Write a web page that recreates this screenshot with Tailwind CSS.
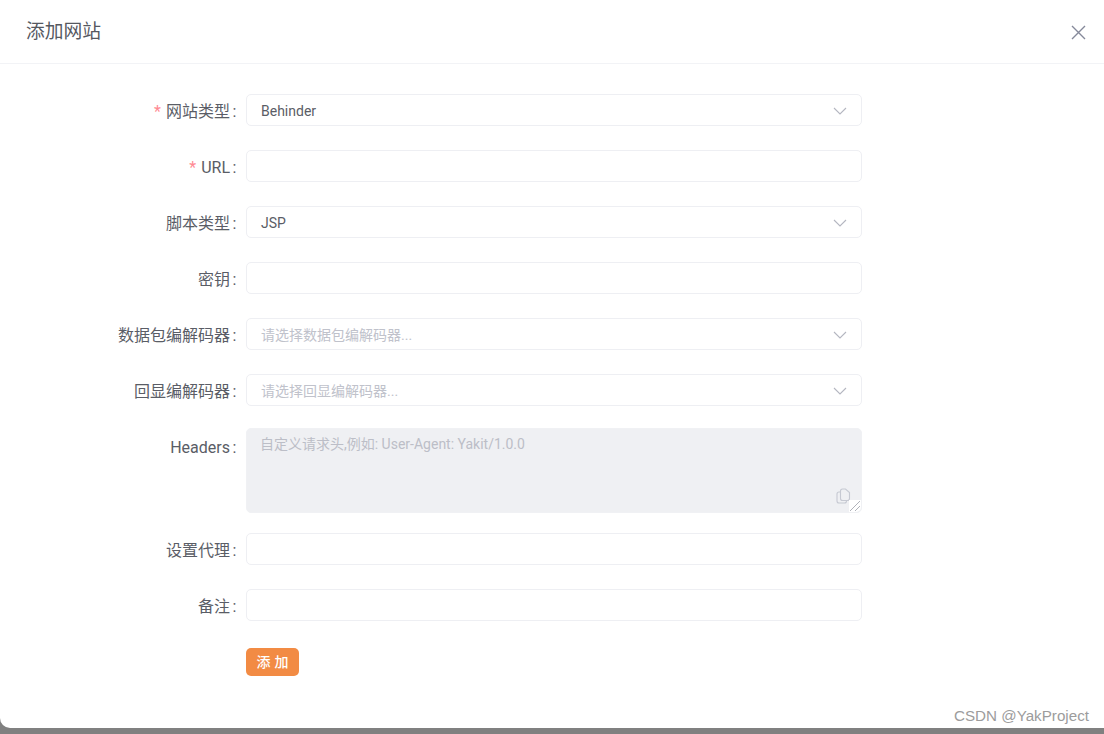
<!DOCTYPE html>
<html lang="zh-CN">
<head>
  <meta charset="UTF-8">
  <title>添加网站</title>
  <script src="https://cdn.jsdelivr.net/npm/@tailwindcss/browser@4"></script>
</head>
<body class="w-[1104px] h-[734px] overflow-hidden bg-[#808080] font-['Roboto','Noto_Sans_CJK_SC',sans-serif]">
  <div class="relative w-[1104px] h-[728px] bg-white rounded-bl-[10px]">
    <!-- header -->
    <div class="h-[64px] border-b border-[#f2f3f6] flex items-center justify-between pl-[26px] pr-[18px] pt-[2px]">
      <span class="text-[18.75px] text-[#55585f]">添加网站</span>
      <svg class="w-[15px] h-[15px] text-[#85899a]" viewBox="0 0 15 15" fill="none" stroke="currentColor" stroke-width="1.4"><path d="M1 1L14 14M14 1L1 14"/></svg>
    </div>

    <!-- form -->
    <div class="pt-[30px] flex flex-col">
      <div class="flex mb-[24px]">
        <label class="w-[246px] pr-[7px] h-[32px] pt-[3px] flex items-center justify-end text-[16px] text-[#5a5d66]"><span class="text-[#ff8a93] mr-[5px]">*</span>网站类型<span class="w-[9px] text-center">:</span></label>
        <div class="w-[616px] h-[32px] border border-[#eeeff3] rounded-[5px] pl-[14px] pr-[14px] pt-[2px] flex items-center justify-between text-[14px] text-[#5a5d66]">
          <span>Behinder</span>
          <svg class="w-[14px] h-[8px] text-[#b4b6c0]" viewBox="0 0 14 8" fill="none" stroke="currentColor" stroke-width="1.1"><path d="M1 1L7 7L13 1"/></svg>
        </div>
      </div>

      <div class="flex mb-[24px]">
        <label class="w-[246px] pr-[7px] h-[32px] pt-[3px] flex items-center justify-end text-[16px] text-[#5a5d66]"><span class="text-[#ff8a93] mr-[5px]">*</span>URL<span class="w-[9px] text-center">:</span></label>
        <div class="w-[616px] h-[32px] border border-[#eeeff3] rounded-[5px]"></div>
      </div>

      <div class="flex mb-[24px]">
        <label class="w-[246px] pr-[7px] h-[32px] pt-[3px] flex items-center justify-end text-[16px] text-[#5a5d66]">脚本类型<span class="w-[9px] text-center">:</span></label>
        <div class="w-[616px] h-[32px] border border-[#eeeff3] rounded-[5px] pl-[14px] pr-[14px] pt-[2px] flex items-center justify-between text-[14px] text-[#5a5d66]">
          <span>JSP</span>
          <svg class="w-[14px] h-[8px] text-[#b4b6c0]" viewBox="0 0 14 8" fill="none" stroke="currentColor" stroke-width="1.1"><path d="M1 1L7 7L13 1"/></svg>
        </div>
      </div>

      <div class="flex mb-[24px]">
        <label class="w-[246px] pr-[7px] h-[32px] pt-[3px] flex items-center justify-end text-[16px] text-[#5a5d66]">密钥<span class="w-[9px] text-center">:</span></label>
        <div class="w-[616px] h-[32px] border border-[#eeeff3] rounded-[5px]"></div>
      </div>

      <div class="flex mb-[24px]">
        <label class="w-[246px] pr-[7px] h-[32px] pt-[3px] flex items-center justify-end text-[16px] text-[#5a5d66]">数据包编解码器<span class="w-[9px] text-center">:</span></label>
        <div class="w-[616px] h-[32px] border border-[#eeeff3] rounded-[5px] pl-[14px] pr-[14px] pt-[2px] flex items-center justify-between text-[14px] text-[#c0c2cb]">
          <span>请选择数据包编解码器...</span>
          <svg class="w-[14px] h-[8px] text-[#b4b6c0]" viewBox="0 0 14 8" fill="none" stroke="currentColor" stroke-width="1.1"><path d="M1 1L7 7L13 1"/></svg>
        </div>
      </div>

      <div class="flex mb-[22px]">
        <label class="w-[246px] pr-[7px] h-[32px] pt-[3px] flex items-center justify-end text-[16px] text-[#5a5d66]">回显编解码器<span class="w-[9px] text-center">:</span></label>
        <div class="w-[616px] h-[32px] border border-[#eeeff3] rounded-[5px] pl-[14px] pr-[14px] pt-[2px] flex items-center justify-between text-[14px] text-[#c0c2cb]">
          <span>请选择回显编解码器...</span>
          <svg class="w-[14px] h-[8px] text-[#b4b6c0]" viewBox="0 0 14 8" fill="none" stroke="currentColor" stroke-width="1.1"><path d="M1 1L7 7L13 1"/></svg>
        </div>
      </div>

      <div class="flex mb-[20px]">
        <label class="w-[246px] pr-[7px] h-[38px] pt-[2px] flex items-center justify-end text-[16px] text-[#5a5d66]">Headers<span class="w-[9px] text-center">:</span></label>
        <div class="relative w-[616px] h-[85px] bg-[#eff0f3] border border-[#f0f1f4] rounded-[5px] pl-[13px] pt-[5px] text-[14px] text-[#bcbec7]">
          自定义请求头,例如: User-Agent: Yakit/1.0.0
          <svg class="absolute right-[10px] bottom-[8px] w-[15px] h-[16px] text-[#c6c9d2]" viewBox="0 0 15 16" fill="none" stroke="currentColor" stroke-width="1.1">
            <path d="M4.5 3.2C4.5 2 5.3 1 6.5 1H9.5L13.5 4.5V10.5C13.5 11.8 12.7 12.5 11.5 12.5H6.5C5.3 12.5 4.5 11.8 4.5 10.5Z"/>
            <path d="M4.5 4H3C1.8 4 1 4.8 1 6V13C1 14.2 1.8 15 3 15H8.5C9.7 15 10.5 14.2 10.5 13V12.5"/>
          </svg>
          <div class="absolute right-0 bottom-0 w-[12px] h-[12px] bg-white rounded-br-[5px] overflow-hidden">
            <svg class="w-[12px] h-[12px] text-[#b0b2ba]" viewBox="0 0 12 12" fill="none" stroke="currentColor" stroke-width="1"><path d="M1 11L11 1M6 11L11 6"/></svg>
          </div>
        </div>
      </div>

      <div class="flex mb-[24px]">
        <label class="w-[246px] pr-[7px] h-[32px] pt-[3px] flex items-center justify-end text-[16px] text-[#5a5d66]">设置代理<span class="w-[9px] text-center">:</span></label>
        <div class="w-[616px] h-[32px] border border-[#eeeff3] rounded-[5px]"></div>
      </div>

      <div class="flex mb-[27px]">
        <label class="w-[246px] pr-[7px] h-[32px] pt-[3px] flex items-center justify-end text-[16px] text-[#5a5d66]">备注<span class="w-[9px] text-center">:</span></label>
        <div class="w-[616px] h-[32px] border border-[#eeeff3] rounded-[5px]"></div>
      </div>

      <div class="pl-[246px]">
        <button class="w-[53px] h-[28px] bg-[#f28b44] rounded-[5px] text-white text-[14px] font-medium flex items-center justify-center gap-[4px]"><span>添</span><span>加</span></button>
      </div>
    </div>

    <!-- watermark -->
    <div class="absolute left-[954px] top-[706px] text-[15.2px] leading-[20px] text-[#9c9c9c] font-['Liberation_Sans',sans-serif]">CSDN @YakProject</div>
  </div>
</body>
</html>
